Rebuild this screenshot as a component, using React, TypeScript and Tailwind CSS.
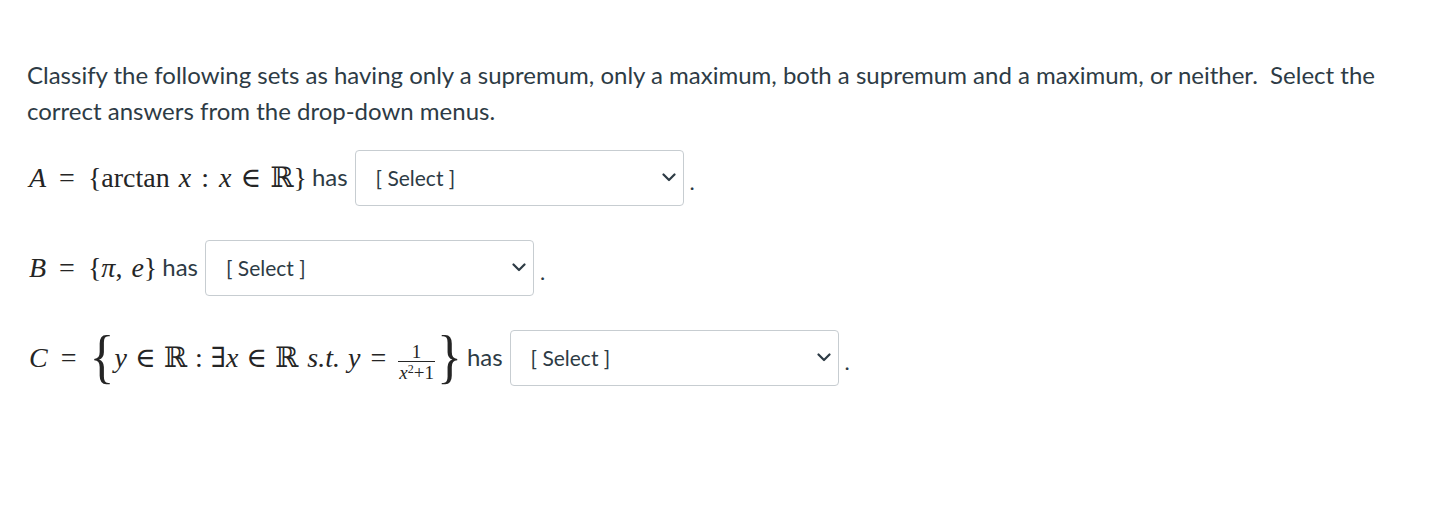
import React from 'react';

const textFont = { fontFamily: 'Lato, "Open Sans", sans-serif' };

function Chevron() {
    return (
        <svg width="14" height="9" viewBox="0 0 14 9" fill="none" stroke="#2d3b45" strokeWidth="2.2" strokeLinecap="round" strokeLinejoin="round">
            <path d="M1.5 1.5 L7 7 L12.5 1.5" />
        </svg>
    );
}

function SelectBox() {
    return (
        <span className="inline-flex items-center justify-between w-[329px] h-[56px] border border-[#c7cdd1] rounded-[4px] bg-white pl-[20px] pr-[7px] pb-[3px] align-middle">
            <span className="text-[21px] text-[#2d3b45] self-start mt-[11px]" style={textFont}>[ Select ]</span>
            <span className="mt-[2px]"><Chevron /></span>
        </span>
    );
}

const mathFont = 'font-["Liberation_Serif","DejaVu_Serif",serif] text-[#252525]';

export default function App() {
    return (
        <div className="bg-white w-[1453px] h-[513px] text-[#2d3b45]" style={textFont}>
            <div className="pl-[27px] pr-[30px] pt-[57px]">
                <p className="text-[24px] leading-[36px]">
                    Classify the following sets as having only a supremum, only a maximum, both a supremum and a maximum, or neither.&nbsp; Select the correct answers from the drop-down menus.
                </p>

                {/* Row A */}
                <div className="flex items-center mt-[21px] h-[56px]">
                    <span className={`${mathFont} text-[28px] ml-[2px]`}>
                        <i>A</i>
                        <span className="mx-[13px]">=</span>
                        <span>{'{'}</span>
                        <span>arctan</span>
                        <i className="ml-[9px]">x</i>
                        <span className="mx-[10px]">:</span>
                        <i>x</i>
                        <span className="mx-[9px]">∈</span>
                        <span>ℝ</span>
                        <span>{'}'}</span>
                    </span>
                    <span className="text-[24px] ml-[5px] mr-[7px] mb-[2px]">has</span>
                    <SelectBox />
                    <span className="text-[22px] ml-[6px] mt-[6px]">.</span>
                </div>

                {/* Row B */}
                <div className="flex items-center mt-[34px] h-[56px]">
                    <span className={`${mathFont} text-[28px] ml-[2px]`}>
                        <i>B</i>
                        <span className="mx-[13px]">=</span>
                        <span>{'{'}</span>
                        <i>π</i>
                        <span className="mr-[9px]">,</span>
                        <i>e</i>
                        <span>{'}'}</span>
                    </span>
                    <span className="text-[24px] ml-[5px] mr-[7px] mb-[2px]">has</span>
                    <SelectBox />
                    <span className="text-[22px] ml-[6px] mt-[6px]">.</span>
                </div>

                {/* Row C */}
                <div className="flex items-center mt-[34px] h-[56px]">
                    <span className={`${mathFont} text-[28px] ml-[2px] inline-flex items-center`}>
                        <i>C</i>
                        <span className="mx-[13px]">=</span>
                        <span className="text-[52px] leading-none scale-y-[1.15] mb-[4px]">{'{'}</span>
                        <i>y</i>
                        <span className="mx-[8px]">∈</span>
                        <span>ℝ</span>
                        <span className="mx-[8px]">:</span>
                        <span>∃</span>
                        <i>x</i>
                        <span className="mx-[8px]">∈</span>
                        <span>ℝ</span>
                        <i className="ml-[9px]">s.t.</i>
                        <i className="ml-[8px]">y</i>
                        <span className="mx-[10px]">=</span>
                        <span className="inline-flex flex-col items-center mt-[8px] mx-[2px]">
                            <span className="text-[19px] leading-[19px] px-[2px]">1</span>
                            <span className="h-[1px] w-full bg-[#252525]" />
                            <span className="text-[19px] leading-[21px] px-[1px]">
                                <i>x</i><sup className="text-[12px]">2</sup>+1
                            </span>
                        </span>
                        <span className="text-[52px] leading-none scale-y-[1.15] mb-[4px]">{'}'}</span>
                    </span>
                    <span className="text-[24px] ml-[5px] mr-[7px] mb-[2px]">has</span>
                    <SelectBox />
                    <span className="text-[22px] ml-[6px] mt-[6px]">.</span>
                </div>
            </div>
        </div>
    );
}
